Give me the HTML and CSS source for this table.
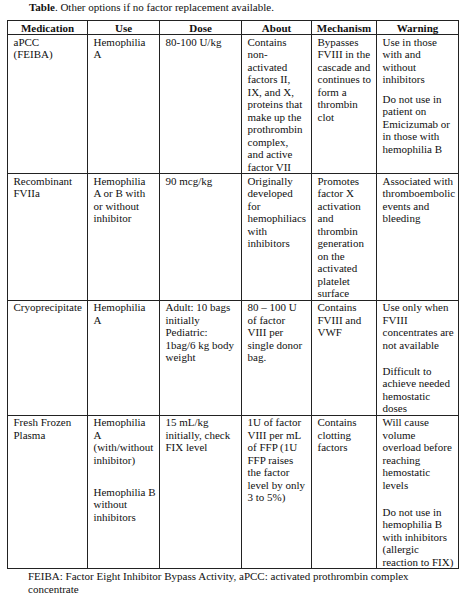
FILE: index.html
```html
<!DOCTYPE html>
<html>
<head>
<meta charset="utf-8">
<link rel="stylesheet" href="styles.css">
</head>
<body>
<div class="page">
  <div class="caption"><b>Table</b>. Other options if no factor replacement available.</div>
  <table class="tbl">
    <colgroup>
      <col class="c1"><col class="c2"><col class="c3"><col class="c4"><col class="c5"><col class="c6">
    </colgroup>
    <thead>
      <tr>
        <th>Medication</th><th>Use</th><th>Dose</th><th>About</th><th>Mechanism</th><th>Warning</th>
      </tr>
    </thead>
    <tbody>
      <tr>
        <td>aPCC<br>(FEIBA)</td>
        <td>Hemophilia<br>A</td>
        <td>80-100 U/kg</td>
        <td>Contains<br>non-<br>activated<br>factors II,<br>IX, and X,<br>proteins that<br>make up the<br>prothrombin<br>complex,<br>and active<br>factor VII</td>
        <td>Bypasses<br>FVIII in the<br>cascade and<br>continues to<br>form a<br>thrombin<br>clot</td>
        <td><p>Use in those<br>with and<br>without<br>inhibitors</p><p class="gap-s">Do not use in<br>patient on<br>Emicizumab or<br>in those with<br>hemophilia B</p></td>
      </tr>
      <tr>
        <td>Recombinant<br>FVIIa</td>
        <td>Hemophilia<br>A or B with<br>or without<br>inhibitor</td>
        <td>90 mcg/kg</td>
        <td>Originally<br>developed<br>for<br>hemophiliacs<br>with<br>inhibitors</td>
        <td>Promotes<br>factor X<br>activation<br>and<br>thrombin<br>generation<br>on the<br>activated<br>platelet<br>surface</td>
        <td>Associated with<br>thromboembolic<br>events and<br>bleeding</td>
      </tr>
      <tr>
        <td>Cryoprecipitate</td>
        <td>Hemophilia<br>A</td>
        <td>Adult: 10 bags<br>initially<br>Pediatric:<br>1bag/6 kg body<br>weight</td>
        <td>80 – 100 U<br>of factor<br>VIII per<br>single donor<br>bag.</td>
        <td>Contains<br>FVIII and<br>VWF</td>
        <td><p>Use only when<br>FVIII<br>concentrates are<br>not available</p><p class="gap-m3">Difficult to<br>achieve needed<br>hemostatic<br>doses</p></td>
      </tr>
      <tr>
        <td>Fresh Frozen<br>Plasma</td>
        <td><p>Hemophilia<br>A<br>(with/without<br>inhibitor)</p><p class="gap-l">Hemophilia B<br>without<br>inhibitors</p></td>
        <td>15 mL/kg<br>initially, check<br>FIX level</td>
        <td>1U of factor<br>VIII per mL<br>of FFP (1U<br>FFP raises<br>the factor<br>level by only<br>3 to 5%)</td>
        <td>Contains<br>clotting<br>factors</td>
        <td><p>Will cause<br>volume<br>overload before<br>reaching<br>hemostatic<br>levels</p><p class="gap-m4">Do not use in<br>hemophilia B<br>with inhibitors<br>(allergic<br>reaction to FIX)</p></td>
      </tr>
    </tbody>
  </table>
  <div class="note">FEIBA: Factor Eight Inhibitor Bypass Activity, aPCC: activated prothrombin complex<br>concentrate</div>
</div>
</body>
</html>
```
FILE: styles.css
```css
html, body {
  margin: 0;
  padding: 0;
  background: #fff;
}
body {
  font-family: "Liberation Serif", "Times New Roman", Times, serif;
  font-size: 11px;
  line-height: 12.5px;
  color: #111;
}
.page {
  padding: 0 0 0 7px;
}
.caption {
  padding-left: 22px;
  height: 20px;
  line-height: 14px;
}
.caption b {
  font-weight: bold;
}
.tbl {
  border-collapse: collapse;
  table-layout: fixed;
  width: 451px;
  border: 1.5px solid #222;
}
.c1 { width: 80px; }
.c2 { width: 72px; }
.c3 { width: 82px; }
.c4 { width: 70px; }
.c5 { width: 65px; }
.c6 { width: 82px; }
.tbl th, .tbl td {
  border: 1px solid #222;
  padding: 0.5px 0 0 5.5px;
  vertical-align: top;
  text-align: left;
  white-space: nowrap;
  font-weight: normal;
}
.tbl th {
  font-weight: bold;
  text-align: center;
  padding: 0.5px 0 0 0;
}
.tbl p {
  margin: 0;
}
.tbl p.gap-s { margin-top: 7.4px; }
.tbl p.gap-m3 { margin-top: 13.5px; }
.tbl p.gap-m4 { margin-top: 14.5px; }
.tbl p.gap-l { margin-top: 19.5px; }
.note {
  padding-left: 21px;
  padding-top: 1px;
}
```
